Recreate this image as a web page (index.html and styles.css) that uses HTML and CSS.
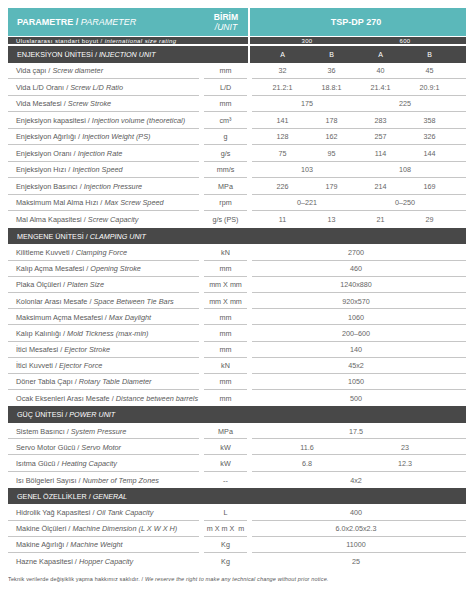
FILE: index.html
```html
<!DOCTYPE html>
<html lang="tr">
<head>
<meta charset="utf-8">
<title>TSP-DP 270</title>
<link rel="stylesheet" href="styles.css">
</head>
<body>
<div class="sheet">
  <div class="hrow head">
    <div class="p"><span>PARAMETRE / <i>PARAMETER</i></span></div>
    <div class="u"><span>BİRİM<br><i>/UNIT</i></span></div>
    <div class="v">TSP-DP 270</div>
  </div>
  <div class="hrow sub">
    <div class="p"><span>Uluslararası standart boyut / <i>international size rating</i></span></div>
    <div class="u"></div>
    <div class="v g2"><span>300</span><span>600</span></div>
  </div>

  <div class="hrow sec first">
    <div class="p"><span>ENJEKSİYON ÜNİTESİ / <i>INJECTION UNIT</i></span></div>
    <div class="u"></div>
    <div class="v g4"><span>A</span><span>B</span><span>A</span><span>B</span></div>
  </div>
  <div class="group inj">
    <div class="row"><div class="p"><span>Vida çapı / <i>Screw diameter</i></span></div><div class="u">mm</div><div class="v"><span>32</span><span>36</span><span>40</span><span>45</span></div></div>
    <div class="row"><div class="p"><span>Vida L/D Oranı / <i>Screw L/D Ratio</i></span></div><div class="u">L/D</div><div class="v"><span>21.2:1</span><span>18.8:1</span><span>21.4:1</span><span>20.9:1</span></div></div>
    <div class="row"><div class="p"><span>Vida Mesafesi / <i>Screw Stroke</i></span></div><div class="u">mm</div><div class="v"><span class="s2">175</span><span class="s2">225</span></div></div>
    <div class="row"><div class="p"><span>Enjeksiyon kapasitesi / <i>Injection volume (theoretical)</i></span></div><div class="u"><span>cm³</span></div><div class="v"><span>141</span><span>178</span><span>283</span><span>358</span></div></div>
    <div class="row"><div class="p"><span>Enjeksiyon Ağırlığı / <i>Injection Weight (PS)</i></span></div><div class="u">g</div><div class="v"><span>128</span><span>162</span><span>257</span><span>326</span></div></div>
    <div class="row"><div class="p"><span>Enjeksiyon Oranı / <i>Injection Rate</i></span></div><div class="u">g/s</div><div class="v"><span>75</span><span>95</span><span>114</span><span>144</span></div></div>
    <div class="row"><div class="p"><span>Enjeksiyon Hızı / <i>Injection Speed</i></span></div><div class="u">mm/s</div><div class="v"><span class="s2">103</span><span class="s2">108</span></div></div>
    <div class="row"><div class="p"><span>Enjeksiyon Basıncı / <i>Injection Pressure</i></span></div><div class="u">MPa</div><div class="v"><span>226</span><span>179</span><span>214</span><span>169</span></div></div>
    <div class="row"><div class="p"><span>Maksimum Mal Alma Hızı / <i>Max Screw Speed</i></span></div><div class="u">rpm</div><div class="v"><span class="s2">0–221</span><span class="s2">0–250</span></div></div>
    <div class="row"><div class="p"><span>Mal Alma Kapasitesi / <i>Screw Capacity</i></span></div><div class="u">g/s (PS)</div><div class="v"><span>11</span><span>13</span><span>21</span><span>29</span></div></div>
  </div>

  <div class="hrow sec">
    <div class="p"><span>MENGENE ÜNİTESİ / <i>CLAMPING UNIT</i></span></div>
  </div>
  <div class="group">
    <div class="row"><div class="p"><span>Kilitleme Kuvveti / <i>Clamping Force</i></span></div><div class="u">kN</div><div class="v"><span class="s4">2700</span></div></div>
    <div class="row"><div class="p"><span>Kalıp Açma Mesafesi / <i>Opening Stroke</i></span></div><div class="u">mm</div><div class="v"><span class="s4">460</span></div></div>
    <div class="row"><div class="p"><span>Plaka Ölçüleri / <i>Platen Size</i></span></div><div class="u">mm X mm</div><div class="v"><span class="s4">1240x880</span></div></div>
    <div class="row"><div class="p"><span>Kolonlar Arası Mesafe / <i>Space Between Tie Bars</i></span></div><div class="u">mm X mm</div><div class="v"><span class="s4">920x570</span></div></div>
    <div class="row"><div class="p"><span>Maksimum Açma Mesafesi / <i>Max Daylight</i></span></div><div class="u">mm</div><div class="v"><span class="s4">1060</span></div></div>
    <div class="row"><div class="p"><span>Kalıp Kalınlığı / <i>Mold Tickness (max-min)</i></span></div><div class="u">mm</div><div class="v"><span class="s4">200–600</span></div></div>
    <div class="row"><div class="p"><span>İtici Mesafesi / <i>Ejector Stroke</i></span></div><div class="u">mm</div><div class="v"><span class="s4">140</span></div></div>
    <div class="row"><div class="p"><span>İtici Kuvveti / <i>Ejector Force</i></span></div><div class="u">kN</div><div class="v"><span class="s4">45x2</span></div></div>
    <div class="row"><div class="p"><span>Döner Tabla Çapı / <i>Rotary Table Diameter</i></span></div><div class="u">mm</div><div class="v"><span class="s4">1050</span></div></div>
    <div class="row"><div class="p"><span>Ocak Eksenleri Arası Mesafe / <i>Distance between barrels</i></span></div><div class="u">mm</div><div class="v"><span class="s4">500</span></div></div>
  </div>

  <div class="hrow sec">
    <div class="p"><span>GÜÇ ÜNİTESİ / <i>POWER UNIT</i></span></div>
  </div>
  <div class="group">
    <div class="row"><div class="p"><span>Sistem Basıncı / <i>System Pressure</i></span></div><div class="u">MPa</div><div class="v"><span class="s4">17.5</span></div></div>
    <div class="row"><div class="p"><span>Servo Motor Gücü / <i>Servo Motor</i></span></div><div class="u">kW</div><div class="v"><span class="s2">11.6</span><span class="s2">23</span></div></div>
    <div class="row"><div class="p"><span>Isıtma Gücü / <i>Heating Capacity</i></span></div><div class="u">kW</div><div class="v"><span class="s2">6.8</span><span class="s2">12.3</span></div></div>
    <div class="row"><div class="p"><span>Isı Bölgeleri Sayısı / <i>Number of Temp Zones</i></span></div><div class="u">--</div><div class="v"><span class="s4">4x2</span></div></div>
  </div>

  <div class="hrow sec">
    <div class="p"><span>GENEL ÖZELLİKLER / <i>GENERAL</i></span></div>
  </div>
  <div class="group">
    <div class="row"><div class="p"><span>Hidrolik Yağ Kapasitesi / <i>Oil Tank Capacity</i></span></div><div class="u">L</div><div class="v"><span class="s4">400</span></div></div>
    <div class="row"><div class="p"><span>Makine Ölçüleri / <i>Machine Dimension (L X W X H)</i></span></div><div class="u">m X m X &nbsp;m</div><div class="v"><span class="s4">6.0x2.05x2.3</span></div></div>
    <div class="row"><div class="p"><span>Makine Ağırlığı / <i>Machine Weight</i></span></div><div class="u">Kg</div><div class="v"><span class="s4">11000</span></div></div>
    <div class="row"><div class="p"><span>Hazne Kapasitesi / <i>Hopper Capacity</i></span></div><div class="u">Kg</div><div class="v"><span class="s4">25</span></div></div>
  </div>

  <p class="note">Teknik verilerde değişiklik yapma hakkımız saklıdır. / <i>We reserve the right to make any technical change without prior notice.</i></p>
</div>
</body>
</html>
```

FILE: styles.css
```css
body {
  margin: 8px;
  background: #ffffff;
  font-family: "Liberation Sans", Arial, Helvetica, sans-serif;
  color: #5a5a5a;
}

.sheet {
  width: 458px;
}

/* header-type rows */
.hrow {
  display: grid;
  grid-template-columns: 196px 44px 1fr;
  color: #ffffff;
}

.hrow > div {
  display: flex;
  align-items: center;
}

.hrow .p {
  padding-left: 9px;
  white-space: nowrap;
}

.hrow .v {
  border-left: 2px solid #ffffff;
  padding: 0 12px 0 8px;
}

.head {
  background: #5bb8ba;
  height: 28px;
  font-weight: bold;
}

.head .p {
  font-size: 9px;
}

.head i {
  font-weight: normal;
}

.head .u {
  justify-content: center;
  text-align: center;
  font-size: 8.6px;
  line-height: 10.5px;
}

.head .v {
  justify-content: center;
  font-size: 9px;
}

.sub {
  margin-top: 1px;
  height: 7px;
  background: #484848;
  font-size: 6px;
  letter-spacing: 0.4px;
}

.sub .p {
  padding-left: 8px;
}

.sec {
  height: 16.7px;
  background: #484848;
  font-size: 7.2px;
}

.sec.first {
  margin-top: 2px;
}

.sec .p {
  grid-column: 1 / 3;
}

.sec.first .p {
  grid-column: auto;
}

.g2,
.g4 {
  display: grid !important;
  align-items: center;
  justify-items: center;
}

.g2 {
  grid-template-columns: 1fr 1fr;
}

.g4 {
  grid-template-columns: repeat(4, 1fr);
  font-size: 7px;
}

/* data rows */
.row {
  display: grid;
  grid-template-columns: 191px 43px 1fr;
  column-gap: 5px;
  height: 16.2px;
  font-size: 7.2px;
}

.inj .row {
  height: 16.5px;
}

.row > div {
  border-bottom: 1px solid #c6c6c6;
  display: flex;
  align-items: center;
  padding-top: 1px;
}

.row:last-child > div {
  border-bottom: none;
}

.row .p {
  padding-left: 8px;
  white-space: nowrap;
  font-size: 7.3px;
}

.row .u {
  justify-content: center;
  white-space: nowrap;
}

.row .v {
  display: grid;
  grid-template-columns: repeat(4, 1fr);
  align-items: center;
  justify-items: center;
  padding: 1px 12px 0 6px;
  color: #666666;
}

.s2 {
  grid-column: span 2;
}

.s4 {
  grid-column: span 4;
}

.note {
  margin: 7px 0 0 0;
  font-size: 5.5px;
  letter-spacing: 0.15px;
  color: #555555;
  white-space: nowrap;
}
```
